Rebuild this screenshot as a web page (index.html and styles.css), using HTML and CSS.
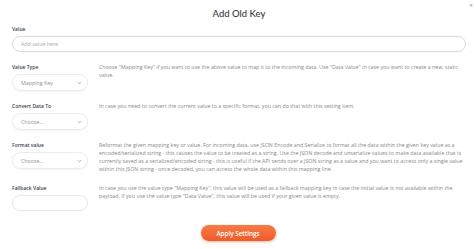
FILE: index.html
```html
<!DOCTYPE html>
<html>
<head>
<meta charset="utf-8">
<link rel="stylesheet" href="styles.css">
</head>
<body>
<div class="modal">
  <div class="header">
    <h1 class="title">Add Old Key</h1>
    <span class="close">×</span>
  </div>
  <div class="value-field">
    <div class="label">Value</div>
    <div class="input wide"><span class="placeholder">Add value here</span></div>
  </div>
  <div class="rows">
    <div class="row">
      <div class="control">
        <div class="label">Value Type</div>
        <div class="select"><span class="sel-text">Mapping Key</span><svg class="chev" viewBox="0 0 6 4"><path d="M1 1 L3 3 L5 1" fill="none" stroke="#888" stroke-width="0.8"/></svg></div>
      </div>
      <p class="desc">Choose "Mapping Key" if you want to use the above value to map it to the incoming data. Use "Data Value" in case you want to create a new, static value.</p>
    </div>
    <div class="row">
      <div class="control">
        <div class="label">Convert Data To</div>
        <div class="select"><span class="sel-text">Choose...</span><svg class="chev" viewBox="0 0 6 4"><path d="M1 1 L3 3 L5 1" fill="none" stroke="#888" stroke-width="0.8"/></svg></div>
      </div>
      <p class="desc">In case you need to convert the current value to a specific format, you can do that with this setting item.</p>
    </div>
    <div class="row">
      <div class="control">
        <div class="label">Format value</div>
        <div class="select"><span class="sel-text">Choose...</span><svg class="chev" viewBox="0 0 6 4"><path d="M1 1 L3 3 L5 1" fill="none" stroke="#888" stroke-width="0.8"/></svg></div>
      </div>
      <p class="desc">Reformat the given mapping key or value. For incoming data, use JSON Encode and Serialize to format all the data within the given key value as a encoded/serialized string - this causes the value to be treated as a string. Use the JSON decode and unserialize values to make data available that is currently saved as a serialized/encoded string - this is useful if the API sends over a JSON string as a value and you want to access only a single value within this JSON string - once decoded, you can access the whole data within this mapping line.</p>
    </div>
    <div class="row">
      <div class="control">
        <div class="label">Fallback Value</div>
        <div class="input"></div>
      </div>
      <p class="desc">In case you use the value type "Mapping Key", this value will be used as a fallback mapping key in case the initial value is not available within the payload. If you use the value type "Data Value", this value will be used if your given value is empty.</p>
    </div>
  </div>
  <div class="footer">
    <button class="apply">Apply Settings</button>
  </div>
</div>
</body>
</html>
```
FILE: styles.css
```css
* { box-sizing: border-box; }
html, body { margin: 0; padding: 0; background: #fff; }
body { font-family: "Open Sans", Lato, sans-serif; color: #333; }
.modal { width: 474px; height: 249px; padding: 0 8px 0 12px; position: relative; }
.header { height: 25px; display: flex; align-items: center; justify-content: center; }
.title { margin: 0; font-family: Lato, sans-serif; font-size: 9.5px; font-weight: 500; color: #3a3a3a; padding-top: 1px; }
.close { position: absolute; right: 1px; top: 1px; font-size: 7px; color: #999; }
.label { font-size: 5px; font-weight: 600; color: #3a4150; line-height: 8px; height: 8px; }
.value-field .input { margin-top: 3px; }
.input { height: 16px; border: 1px solid #dcdcdc; border-radius: 9px; display: flex; align-items: center; padding-left: 8px; box-shadow: 0 0 2px rgba(0,0,0,0.04); }
.input.wide { width: 454px; }
.placeholder { font-size: 5.3px; color: #a8a8a8; }
.rows { margin-top: 11px; display: flex; flex-direction: column; gap: 11px; }
.row { display: grid; grid-template-columns: 76px 1fr; column-gap: 11px; }
.control { display: flex; flex-direction: column; gap: 3px; }
.control .input { height: 16px; border-color: #e8e8e8; }
.select { height: 17px; border: 1px solid #ececec; border-radius: 9px; display: flex; align-items: center; justify-content: space-between; padding: 0 5px 0 8px; box-shadow: 0 1px 2px rgba(0,0,0,0.05); }
.sel-text { font-size: 5.3px; color: #8f8f8f; }
.chev { width: 5px; height: 4px; }
.desc { margin: 0; font-size: 5.3px; line-height: 8px; color: #888; width: 364px; }
.footer { display: flex; justify-content: center; margin-top: 14px; padding-right: 2px; }
.apply { width: 75px; height: 16px; border: none; border-radius: 8px; background: linear-gradient(180deg, #f77b45, #ee5a2a); color: #fff; font-family: "Open Sans", sans-serif; font-size: 6.3px; font-weight: 600; box-shadow: 0 1px 3px rgba(238,90,42,0.45); padding: 0; }
```
